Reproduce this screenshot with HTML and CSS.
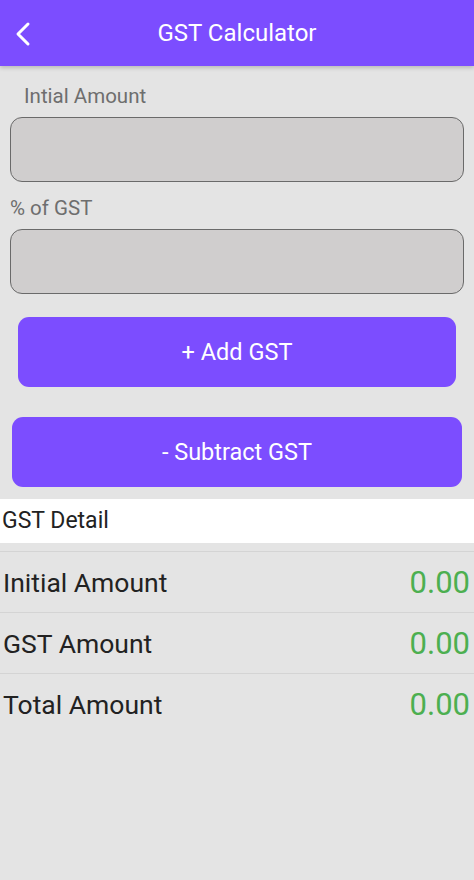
FILE: index.html
```html
<!DOCTYPE html>
<html lang="en">
<head>
<meta charset="UTF-8">
<meta name="viewport" content="width=device-width, initial-scale=1.0">
<title>GST Calculator</title>
<link rel="stylesheet" href="styles.css">
</head>
<body>
<div class="toolbar">
    <button class="back" aria-label="Back">
        <svg width="20" height="26" viewBox="0 0 20 26"><path d="M14 3 L4 13 L14 23" fill="none" stroke="#fff" stroke-width="3" stroke-linecap="round" stroke-linejoin="round"/></svg>
    </button>
    <div class="title">GST Calculator</div>
</div>

<div class="form">
    <label class="label first" for="amount">Intial Amount</label>
    <input class="input" id="amount" type="text">
    <label class="label second" for="percent">% of GST</label>
    <input class="input" id="percent" type="text">
    <button class="button add">+ Add GST</button>
    <button class="button sub">- Subtract GST</button>
</div>

<div class="detail">GST Detail</div>

<div class="result">
    <div class="row"><span>Initial Amount</span><span class="value">0.00</span></div>
    <div class="row"><span>GST Amount</span><span class="value">0.00</span></div>
    <div class="row"><span>Total Amount</span><span class="value">0.00</span></div>
</div>
</body>
</html>
```

FILE: styles.css
```css
body {
    font-family: Roboto, 'Noto Sans', sans-serif;
    background-color: #e4e4e4;
    margin: 0;
    padding: 0;
    height: 880px;
    overflow: hidden;
}
.toolbar {
    height: 66px;
    background-color: #7c4dff;
    display: flex;
    align-items: center;
    position: relative;
    box-shadow: 0 2px 4px rgba(0, 0, 0, 0.18);
}
.back {
    border: none;
    background: none;
    padding: 0;
    margin-left: 14px;
    margin-top: 2px;
    width: 20px;
    height: 26px;
}
.title {
    flex: 1;
    text-align: center;
    color: #fff;
    font-size: 24px;
    margin-right: 34px;
}
.form {
    padding: 0 10px 12px;
}
.label {
    display: block;
    font-size: 20.5px;
    line-height: 24px;
    color: #6e6e6e;
    margin-bottom: 9px;
}
.label.first {
    padding-top: 18px;
    margin-left: 14px;
}
.label.second {
    padding-top: 14px;
}
.input {
    display: block;
    box-sizing: border-box;
    width: 100%;
    height: 65px;
    border: 1px solid #6a6a6a;
    border-radius: 12px;
    background-color: #d0cece;
    font-size: 20px;
    padding: 0 14px;
    outline: none;
}
.button {
    display: block;
    box-sizing: border-box;
    height: 70px;
    border: none;
    border-radius: 11px;
    background-color: #7c4dff;
    color: #fff;
    font-family: inherit;
    font-size: 23.5px;
    cursor: pointer;
}
.button.add {
    margin: 23px 8px 0;
    width: calc(100% - 16px);
}
.button.sub {
    margin: 30px 2px 0;
    width: calc(100% - 4px);
}
.detail {
    background-color: #fff;
    height: 44px;
    line-height: 44px;
    font-size: 23px;
    color: #222;
    padding-left: 2px;
}
.result {
    padding-top: 8px;
}
.row {
    display: flex;
    justify-content: space-between;
    align-items: center;
    height: 60px;
    border-top: 1px solid #d4d4d4;
    padding: 0 4px 0 3px;
    font-size: 26.5px;
    color: #222;
}
.value {
    color: #4caf50;
    font-size: 31px;
}
```
